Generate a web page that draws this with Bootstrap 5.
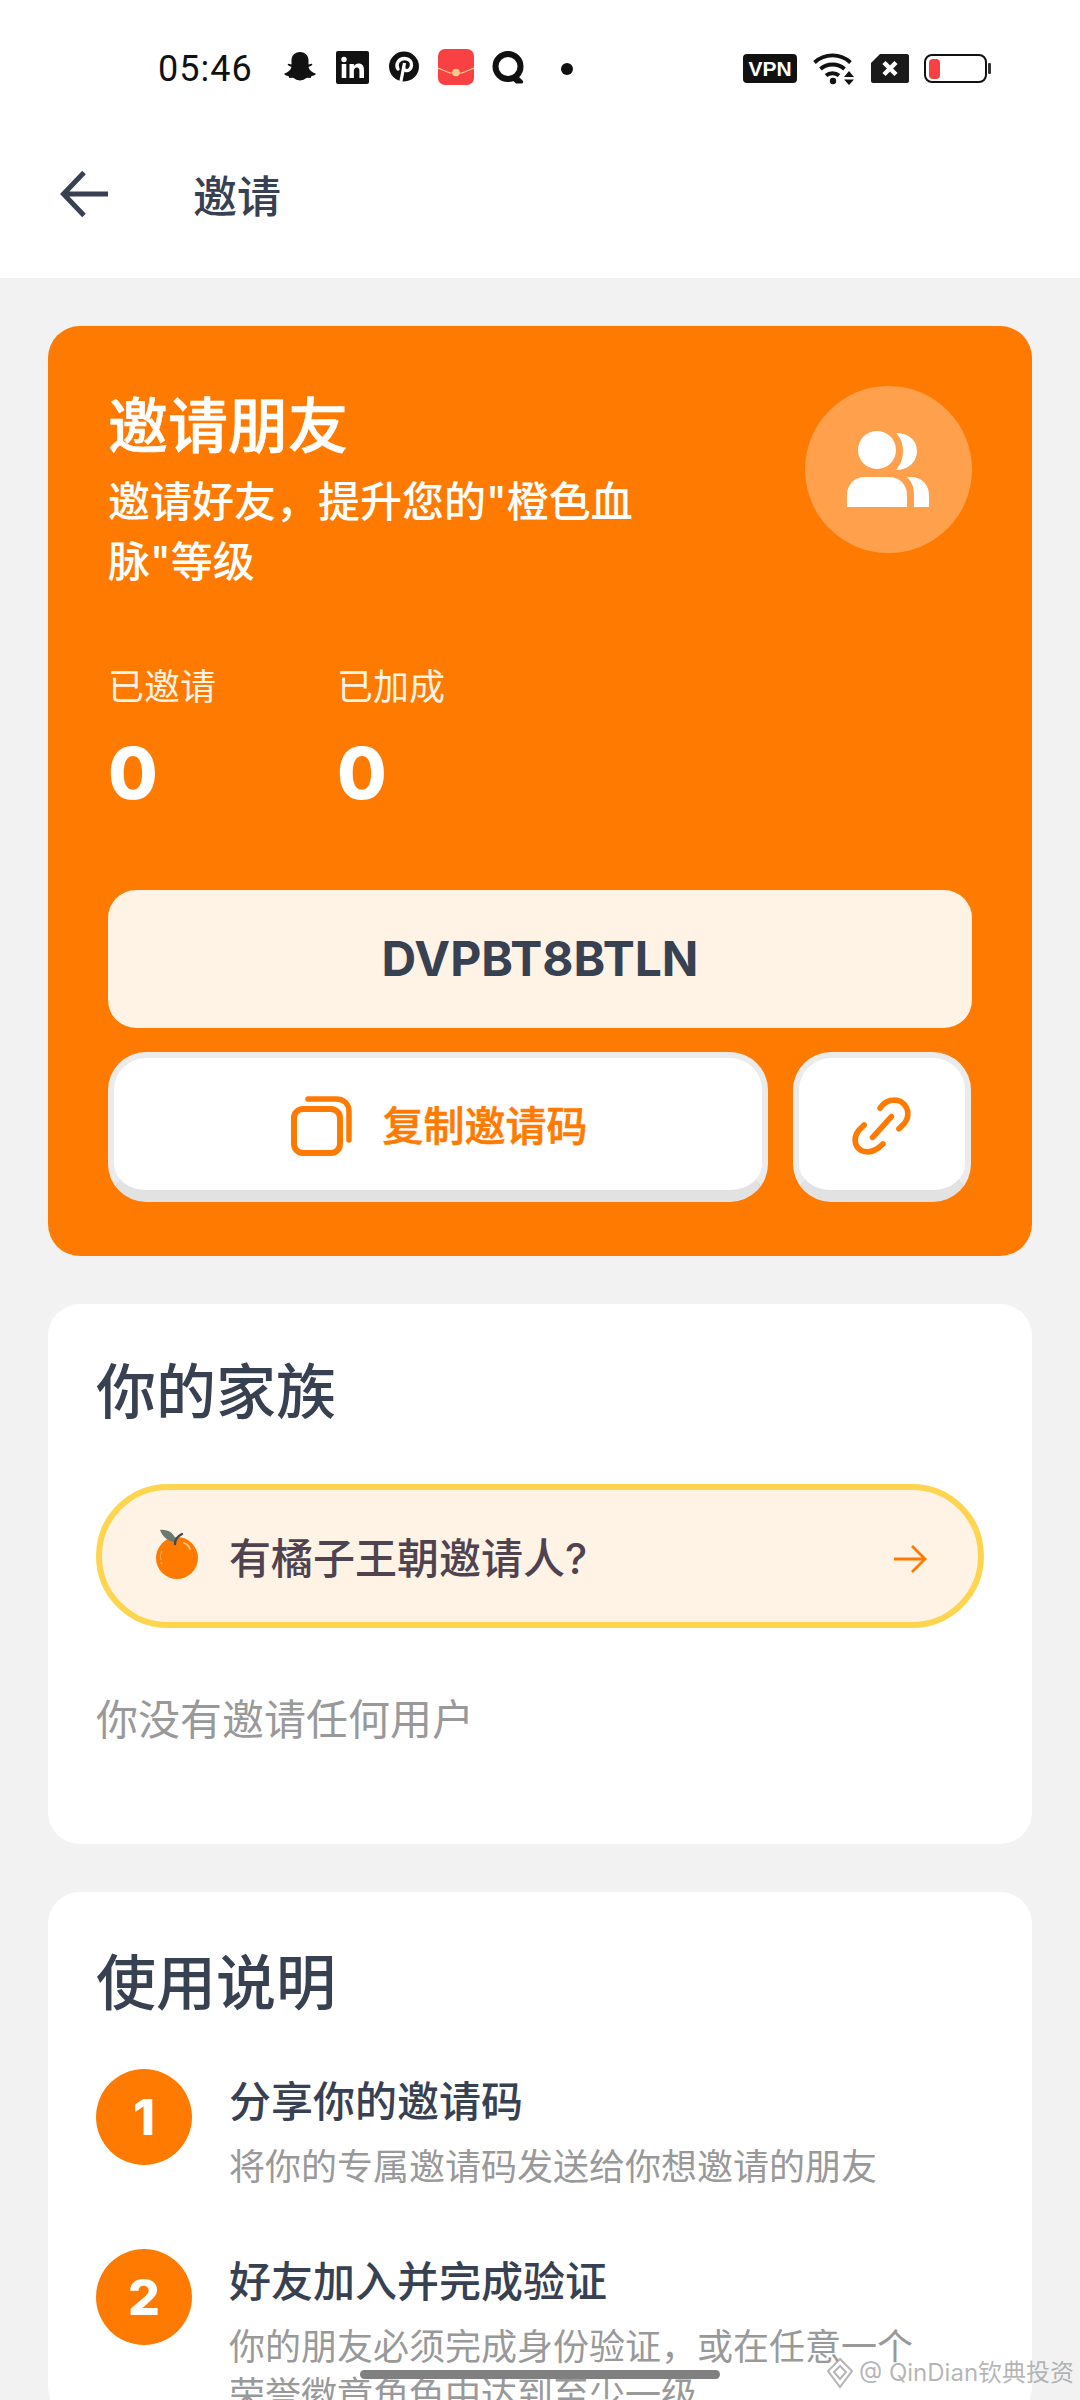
<!DOCTYPE html>
<html lang="zh-CN">
<head>
  <meta charset="UTF-8" />
  <title>邀请</title>
  <meta name="viewport" content="width=device-width, initial-scale=1.0" />
  <link href="https://cdn.jsdelivr.net/npm/bootstrap@5.3.0/dist/css/bootstrap.min.css" rel="stylesheet" />
  <style>
    body { font-family: Inter, "Noto Sans CJK SC", sans-serif; background: #f2f2f2; color: #374151; }
    .screen { width: 1080px; height: 2400px; overflow: hidden; position: relative; }

    /* status bar */
    .status-bar { height: 100px; padding: 51px 89px 0 158px; }
    .status-time { font-family: Roboto, sans-serif; font-size: 36px; line-height: 36px; color: #111; width: 94px; letter-spacing: 1px; margin-right: 32px; }
    .ic-gap-20 { margin-left: 20px; }
    .ic-red { margin: -2px 0 0 19px; }
    .ic-q { margin-left: 18px; }
    .ic-dot { margin: 12px 0 0 37px; }
    .vpn-tag { width: 54px; height: 29px; margin-top: 3px; background: #111; border-radius: 4px; color: #fff; font: 700 21px/29px "Liberation Sans", sans-serif; text-align: center; }
    .ic-wifi { margin-left: 16px; }
    .ic-sim { margin: 3px 0 0 13px; }
    .ic-batt { margin: 3px 0 0 15px; }

    /* header */
    .top-bar { height: 178px; padding: 71px 0 0 60px; }
    .top-title { font-size: 44px; font-weight: 500; margin: -4px 0 0 84px; line-height: 60px; }

    /* cards */
    .page-body { padding: 48px 48px 0; gap: 48px; }
    .panel { border: 0; border-radius: 32px; background: #fff; }
    .panel-orange { background: #ff7a00; color: #fff; padding: 60px 60px 54px; }
    .panel-family { padding: 46px 48px 94px; }
    .panel-howto { padding: 49px 48px 0; }
    .invite-title { font-size: 60px; line-height: 78px; font-weight: 500; padding-top: 1px; margin-bottom: -1px; -webkit-text-stroke: .6px #fff; }
    .invite-sub { font-size: 42px; line-height: 60px; font-weight: 500; max-width: 540px; margin-top: 8px; }
    .people-circle { width: 167px; height: 167px; border-radius: 50%; background: #ffa04d; flex-shrink: 0; }
    .people-icon { margin-right: 7px; }
    .stats { margin-top: 70px; gap: 121px; }
    .stat-label { font-size: 36px; line-height: 50px; width: 108px; color: #fff3e6; }
    .stat-value { font-size: 72px; line-height: 88px; font-weight: 800; margin-top: 17px; }
    .code-box { height: 138px; margin-top: 73px; border-radius: 28px; background: #fff3e6; color: #374151; font-size: 48px; font-weight: 700; }
    .action-row { margin-top: 24px; gap: 25px; }
    .btn-action { height: 150px; background: #fff; border-style: solid; border-color: #ebebeb #ebebeb #e2e2e2; border-width: 6px 6px 12px; border-radius: 38px; color: #ff7a00; font-size: 41px; font-weight: 500; padding: 3px 0 0; gap: 30px; }
    .btn-action:hover { background: #fff; color: #ff7a00; border-color: #ebebeb #ebebeb #e2e2e2; }
    .btn-copy { width: 660px; }
    .btn-copy span { padding-top: 3px; -webkit-text-stroke: .6px #ff7a00; }
    .btn-link-icon { width: 178px; }

    .section-title { font-size: 60px; line-height: 84px; font-weight: 500; }
    .family-pill { height: 144px; margin-top: 50px; border: 6px solid #ffd54f; border-radius: 72px; background: #fff3e6; color: #4f4350; font-size: 42px; font-weight: 500; padding: 0 51px 0 43px; gap: 14px; }
    .family-pill span, .pill-arrow { margin-top: 5px; }
    .empty-note { font-size: 42px; line-height: 60px; color: #999; margin-top: 62px; }

    .steps { margin-top: 44px; gap: 58px; }
    .step-row { gap: 37px; }
    .step-num { width: 96px; height: 96px; border-radius: 50%; background: #ff7a00; color: #fff; font-size: 50px; font-weight: 800; flex-shrink: 0; }
    .step-head { font-size: 42px; line-height: 60px; font-weight: 500; margin-top: 3px; }
    .step-desc { font-size: 36px; line-height: 48px; color: #999; margin-top: 11px; max-width: 700px; }

    /* over the content */
    .home-bar { position: absolute; left: 360px; top: 2370px; width: 360px; height: 9px; border-radius: 5px; background: #808080; }
    .watermark { position: absolute; left: 826px; top: 2353px; width: 254px; gap: 5px; color: rgba(150, 150, 150, .7); font-size: 24px; line-height: 40px; white-space: nowrap; }
  </style>
</head>
<body>
<div class="screen">

  <div class="bg-white">
    <!-- status bar -->
    <div class="status-bar d-flex align-items-start">
      <div class="status-time">05:46</div>
      <svg width="32" height="33" viewBox="0 0 32 33"><path fill="#111" d="M16 1c5.500 0 8.500 4 8.500 8.500v4l3-.8c1 .2 1 1.300 0 1.800l-3 1.500c.8 3.200 3.500 5.500 7 6.500.6 1.200-1.700 2-4 2.400l-.8 2.100-3.300-.2c-2 .3-3.500 2.700-7.400 2.700s-5.400-2.400-7.400-2.700l-3.300.2-.8-2.100c-2.300-.4-4.600-1.200-4-2.400 3.500-1 6.200-3.300 7-6.500l-3-1.500c-1-.5-1-1.600 0-1.800l3 .8v-4C7.500 5 10.500 1 16 1z"/></svg>
      <svg class="ic-gap-20" width="33" height="33" viewBox="0 0 33 33"><rect width="33" height="33" rx="2" fill="#111"/><circle cx="8" cy="8.500" r="2.700" fill="#fff"/><path fill="#fff" d="M5.700 13h4.600v14H5.700zM13.500 13h4.400v2c1-1.500 2.500-2.400 4.500-2.400 4 0 5.600 2.500 5.600 6.500V27h-4.600v-7.200c0-2-.7-3.300-2.500-3.300s-3 1.300-3 3.300V27h-4.400z"/></svg>
      <svg class="ic-gap-20" width="30" height="31" viewBox="0 0 30 31"><circle cx="15" cy="15.500" r="15" fill="#111"/><path fill="none" stroke="#fff" stroke-width="3.400" stroke-linecap="round" d="M9 18c-3-5 1-10.500 6.500-10.500 4.800 0 7.500 3.300 7 7-.5 3.500-3 5.500-5.500 5-1.800-.4-2.500-1.500-2.300-3"/><path stroke="#fff" stroke-width="3.200" d="M15.500 12l-3.500 18"/></svg>
      <svg class="ic-red" width="36" height="36" viewBox="0 0 36 36"><rect width="36" height="36" rx="7" fill="#f94144"/><path fill="none" stroke="#f7c98b" stroke-width="1.200" d="M0 19l12 5h12l12-5"/><circle cx="18" cy="23.500" r="3.800" fill="#f7c98b"/></svg>
      <svg class="ic-q" width="32" height="33" viewBox="0 0 32 33"><circle cx="16" cy="15.500" r="12.500" fill="none" stroke="#111" stroke-width="6"/><path fill="#111" d="M18 27l6-4 7 7c.5 1 0 2.500-1.500 2.500H24z"/></svg>
      <svg class="ic-dot" width="12" height="12" viewBox="0 0 12 12"><circle cx="6" cy="6" r="6" fill="#111"/></svg>

      <div class="vpn-tag ms-auto">VPN</div>
      <svg class="ic-wifi" width="45" height="34" viewBox="0 0 45 34"><g fill="none" stroke="#111" stroke-width="3.800"><path d="M1.500 11.500c10-9.500 26-9.500 36 0"/><path d="M7.500 18c6.500-6 17.500-6 24 0"/><path d="M13 24.500c3.500-3 9.500-3 13 0"/></g><circle cx="20" cy="30" r="3.200" fill="#111"/><path fill="#111" d="M31 26l5-6 5 6zM31 28.500h10l-5 5.500z"/></svg>
      <svg class="ic-sim" width="38" height="29" viewBox="0 0 38 29"><path fill="#1a1a1a" d="M9 0h27c1 0 2 1 2 2v25c0 1-1 2-2 2H2c-1 0-2-1-2-2V9z"/><path stroke="#fff" stroke-width="4.500" d="M13 8.500l12 12M25 8.500l-12 12"/></svg>
      <svg class="ic-batt" width="67" height="29" viewBox="0 0 67 29"><rect x="1" y="1" width="61" height="27" rx="7" fill="#fff" stroke="#111" stroke-width="2"/><rect x="5" y="5" width="11" height="20" rx="4" fill="#f94144"/><rect x="64" y="9" width="3" height="11" rx="1" fill="#333"/></svg>
    </div>

    <!-- header -->
    <div class="top-bar d-flex align-items-start">
      <svg width="49" height="46" viewBox="0 0 49 46"><path fill="none" stroke="#374151" stroke-width="5" d="M48 23H4M24 1.500 3.500 23 24 44.500"/></svg>
      <div class="top-title">邀请</div>
    </div>
  </div>

  <div class="page-body d-flex flex-column">

    <!-- invite card -->
    <div class="card panel panel-orange">
      <div class="d-flex justify-content-between align-items-start">
        <div>
          <div class="invite-title">邀请朋友</div>
          <div class="invite-sub">邀请好友，提升您的&quot;橙色血脉&quot;等级</div>
        </div>
        <div class="people-circle d-flex align-items-center justify-content-center">
          <svg class="people-icon" width="110" height="110" viewBox="0 0 110 110" fill="#fff">
            <circle cx="47" cy="35" r="19"/>
            <path d="M17 92V80c0-10 7-18 18-18h24c11 0 18 8 18 18v12z"/>
            <path d="M66 18c12 0 21 7 21 18s-9 19-21 19c5-6 7-12 7-19s-2-13-7-18z"/>
            <path d="M77 62h4c11 0 18 8 18 18v12H84V80c0-8-2-13-7-18z"/>
          </svg>
        </div>
      </div>
      <div class="stats d-flex">
        <div>
          <div class="stat-label">已邀请</div>
          <div class="stat-value">0</div>
        </div>
        <div>
          <div class="stat-label">已加成</div>
          <div class="stat-value">0</div>
        </div>
      </div>
      <div class="code-box d-flex align-items-center justify-content-center">DVPBT8BTLN</div>
      <div class="action-row d-flex">
        <button class="btn btn-action btn-copy d-flex align-items-center justify-content-center" type="button">
          <svg width="64" height="64" viewBox="8 12 64 64" fill="none" stroke="#ff7a00"><rect x="13" y="27" width="46" height="44" rx="9" stroke-width="6"/><path stroke-width="5.500" stroke-linecap="round" d="M27 17h28c8 0 13 5 13 13v28"/></svg>
          <span>复制邀请码</span>
        </button>
        <button class="btn btn-action btn-link-icon d-flex align-items-center justify-content-center" type="button">
          <svg width="64" height="64" viewBox="8 9 68 68" fill="none" stroke="#ff7a00" stroke-width="6" stroke-linecap="round"><path d="M40 24C46 15 56 14 62 17c8 5 10 15 4 23l-6 6"/><path d="M23 42l-6 6c-6 8-4 17 3 21 7 3 15 1 23-7"/><path d="M52 33 32 55"/></svg>
        </button>
      </div>
    </div>

    <!-- family -->
    <div class="card panel panel-family">
      <div class="section-title">你的家族</div>
      <div class="family-pill d-flex align-items-center">
        <svg width="70" height="70" viewBox="0 0 70 70">
          <circle cx="32" cy="37" r="21" fill="#ff7a00"/>
          <path fill="none" stroke="#ffc999" stroke-width="1.800" stroke-linecap="round" d="M39 22c3 1 5 3 6 6"/>
          <path fill="none" stroke="#ffb266" stroke-width="1" d="M17 30c-2 3-2 6-1 9M16 41l1 2"/>
          <path fill="#6b7a70" d="M15 9c6-1 15 2 16 12-7 0-13-4-16-12z"/>
          <path fill="none" stroke="#3f4a55" stroke-width="2.400" stroke-linecap="round" d="M30 23c0-4 3-8 7-10"/>
        </svg>
        <span>有橘子王朝邀请人?</span>
        <svg class="pill-arrow ms-auto" width="33" height="28" viewBox="0 0 33 28"><path fill="none" stroke="#ff7a00" stroke-width="2.800" d="M0 14h30M18 1l13 13-13 13"/></svg>
      </div>
      <div class="empty-note">你没有邀请任何用户</div>
    </div>

    <!-- how to -->
    <div class="card panel panel-howto">
      <div class="section-title">使用说明</div>
      <div class="steps d-flex flex-column">
        <div class="step-row d-flex">
          <div class="step-num d-flex align-items-center justify-content-center">1</div>
          <div>
            <div class="step-head">分享你的邀请码</div>
            <div class="step-desc">将你的专属邀请码发送给你想邀请的朋友</div>
          </div>
        </div>
        <div class="step-row d-flex">
          <div class="step-num d-flex align-items-center justify-content-center">2</div>
          <div>
            <div class="step-head">好友加入并完成验证</div>
            <div class="step-desc">你的朋友必须完成身份验证，或在任意一个荣誉徽章角色中达到至少一级</div>
          </div>
        </div>
      </div>
    </div>

  </div>

  <div class="home-bar"></div>
  <div class="watermark d-flex align-items-center">
    <svg width="28" height="32" viewBox="0 0 28 32" fill="none" stroke="rgba(150,150,150,.7)" stroke-width="2"><path d="M14 2 26 14 14 30 2 14z"/><path d="M14 9l6 6-6 7-6-7z"/></svg>
    <span>@ QinDian钦典投资</span>
  </div>
</div>
<script src="https://cdn.jsdelivr.net/npm/bootstrap@5.3.0/dist/js/bootstrap.bundle.min.js"></script>
</body>
</html>
